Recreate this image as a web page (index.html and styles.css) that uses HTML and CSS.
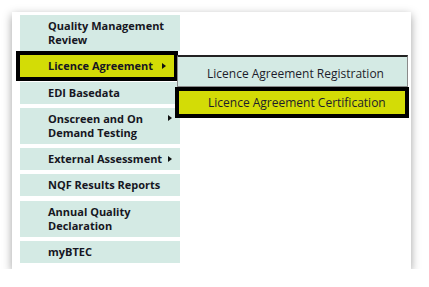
FILE: index.html
```html
<!DOCTYPE html>
<html>
<head>
<meta charset="utf-8">
<link rel="stylesheet" href="styles.css">
</head>
<body>
<div class="card">
  <ul class="menu">
    <li class="item">Quality Management Review</li>
    <li class="item active has-sub">Licence Agreement</li>
    <li class="item">EDI Basedata</li>
    <li class="item has-sub">Onscreen and On Demand Testing</li>
    <li class="item has-sub">External Assessment</li>
    <li class="item">NQF Results Reports</li>
    <li class="item">Annual Quality Declaration</li>
    <li class="item">myBTEC</li>
  </ul>
  <ul class="submenu">
    <li class="sub-item">Licence Agreement Registration</li>
    <li class="sub-item sub-active">Licence Agreement Certification</li>
  </ul>
</div>
</body>
</html>
```
FILE: styles.css
```css
html, body {
  margin: 0;
  padding: 0;
  background: #ffffff;
}
body {
  padding: 12px 0 0 12px;
  font-family: "Open Sans", "Liberation Sans", sans-serif;
  color: #161622;
}
.card {
  position: relative;
  width: 399px;
  height: 257px;
  box-sizing: border-box;
  background: #ffffff;
  box-shadow: 0 3px 9px rgba(0, 0, 0, 0.38);
  padding: 3px 0 0 8px;
}
.menu {
  list-style: none;
  margin: 0;
  padding: 0;
  display: flex;
  flex-direction: column;
  gap: 4.3px;
  width: 160px;
}
.item {
  position: relative;
  background: #d4eae4;
  font-size: 11px;
  font-weight: bold;
  line-height: 14px;
  padding: 4px 14px 4px 28px;
}
.has-sub::after {
  content: "";
  position: absolute;
  right: 8px;
  top: 7.5px;
  border-left: 4px solid #111;
  border-top: 3.5px solid transparent;
  border-bottom: 3.5px solid transparent;
}
.active {
  background: #d3dc06;
  width: 154px;
  box-sizing: border-box;
  outline: 4px solid #000;
}
.submenu {
  position: absolute;
  left: 163px;
  top: 43px;
  list-style: none;
  margin: 0;
  padding: 0;
  display: flex;
  flex-direction: column;
}
.sub-item {
  font-size: 12px;
  line-height: 16px;
  color: #1d1d2b;
}
.sub-item:first-child {
  margin-left: 2px;
  width: 231px;
  height: 32px;
  box-sizing: border-box;
  background: #d4eae4;
  border: 1px solid #8a8a8a;
  border-top: 2px solid #222;
  padding: 9px 0 0 29px;
}
.sub-active {
  width: 234px;
  height: 31px;
  box-sizing: border-box;
  background: #d3dc06;
  border: 4px solid #000;
  padding: 4px 0 0 29px;
}
```
